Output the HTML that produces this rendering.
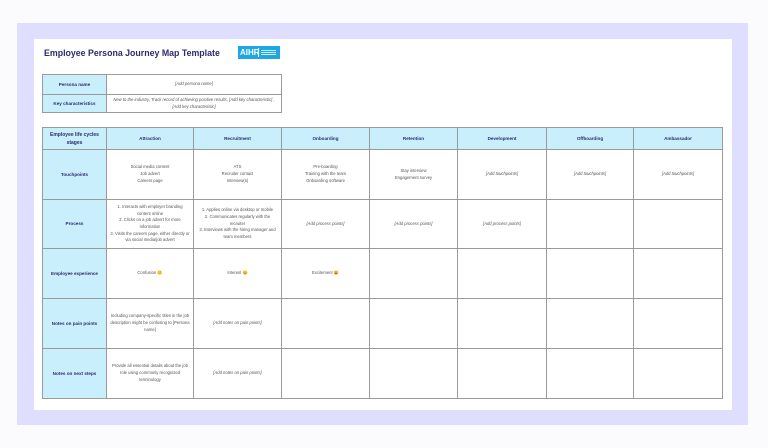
<!DOCTYPE html>
<html><head><meta charset="utf-8"><style>
html,body{margin:0;padding:0;width:768px;height:448px;background:#fbfbfe;overflow:hidden;font-family:"Liberation Sans",sans-serif;color:#2d2a6e}
.lav{position:absolute;left:17px;top:23px;width:731px;height:402px;background:#e0defe}
.card{position:absolute;left:34px;top:39px;width:698px;height:371px;background:#fff}
.title{position:absolute;left:44px;top:48px;font-size:8.8px;font-weight:bold;color:#2d2a6e}
.logo{position:absolute;left:238px;top:46px;width:42px;height:13px;background:#1ea7e4;color:#fff;font-weight:bold;font-size:8px;line-height:13px}
.logo span{position:absolute;left:2px;top:0}
.logo i{position:absolute;left:20px;top:2px;width:1px;height:9px;background:#fff}
.logo b{position:absolute;left:23px;top:4px;width:15px;height:1px;background:#cdefff;box-shadow:0 2px 0 #cdefff,0 4px 0 #cdefff}
table{position:absolute;border-collapse:collapse;table-layout:fixed;font-size:4.2px;text-align:center}
td{border:1px solid #9a9a9a;padding:1px 3px;vertical-align:middle;line-height:1.6}
.h{background:#c9effd;font-weight:bold;font-size:4.6px;color:#2d2a6e}
.it{font-style:italic;color:#555}
.t1{left:42px;top:74px;width:240px;border:1.5px solid #555}
.t2{left:42px;top:127px;width:680px;border:1.5px solid #555}
.n{color:#555}
</style></head><body>
<div class="lav"></div><div class="card"></div>
<div class="title">Employee Persona Journey Map Template</div>
<div class="logo"><span>AIHR</span><i></i><b></b></div>
<table class="t1">
<col style="width:64px"><col>
<tr style="height:20px"><td class="h">Persona name</td><td class="it">[Add persona name]</td></tr>
<tr style="height:18px"><td class="h">Key characteristics</td><td class="it">New to the industry, Track record of achieving positive results, [Add key characteristic] , [Add key characteristic]</td></tr>
</table>
<table class="t2">
<col style="width:64px"><col style="width:87px"><col style="width:88px"><col style="width:88px"><col style="width:88px"><col style="width:89px"><col style="width:87px"><col style="width:89px">
<tr style="height:22px"><td class="h" style="font-size:5px">Employee life cycles stages</td><td class="h">Attraction</td><td class="h">Recruitment</td><td class="h">Onboarding</td><td class="h">Retention</td><td class="h">Development</td><td class="h">Offboarding</td><td class="h">Ambassador</td></tr>
<tr style="height:50px"><td class="h">Touchpoints</td><td class="n">Social media content<br>Job advert<br>Careers page</td><td class="n">ATS<br>Recruiter contact<br>Interview(s)</td><td class="n">Pre-boarding<br>Training with the team<br>Onboarding software</td><td class="n">Stay interview<br>Engagement survey</td><td class="it">[Add touchpoints]</td><td class="it">[Add touchpoints]</td><td class="it">[Add touchpoints]</td></tr>
<tr style="height:49px"><td class="h">Process</td><td class="n">1. Interacts with employer branding content online<br>2. Clicks on a job advert for more information<br>3. Visits the careers page, either directly or via social media/job advert</td><td class="n">1. Applies online via desktop or mobile<br>2. Communicates regularly with the recruiter<br>3. Interviews with the hiring manager and team members</td><td class="it">[Add process points]</td><td class="it">[Add process points]</td><td class="it">[Add process points]</td><td></td><td></td></tr>
<tr style="height:50px"><td class="h">Employee experience</td><td class="n">Confusion 😕</td><td class="n">Interest 😊</td><td class="n">Excitement 😀</td><td></td><td></td><td></td><td></td></tr>
<tr style="height:50px"><td class="h">Notes on pain points</td><td class="n">Including company-specific titles in the job description might be confusing to [Persona name]</td><td class="it">[Add notes on pain points]</td><td></td><td></td><td></td><td></td><td></td></tr>
<tr style="height:50px"><td class="h">Notes on next steps</td><td class="n">Provide all essential details about the job role using commonly recognized terminology</td><td class="it">[Add notes on pain points]</td><td></td><td></td><td></td><td></td><td></td></tr>
</table>
</body></html>
